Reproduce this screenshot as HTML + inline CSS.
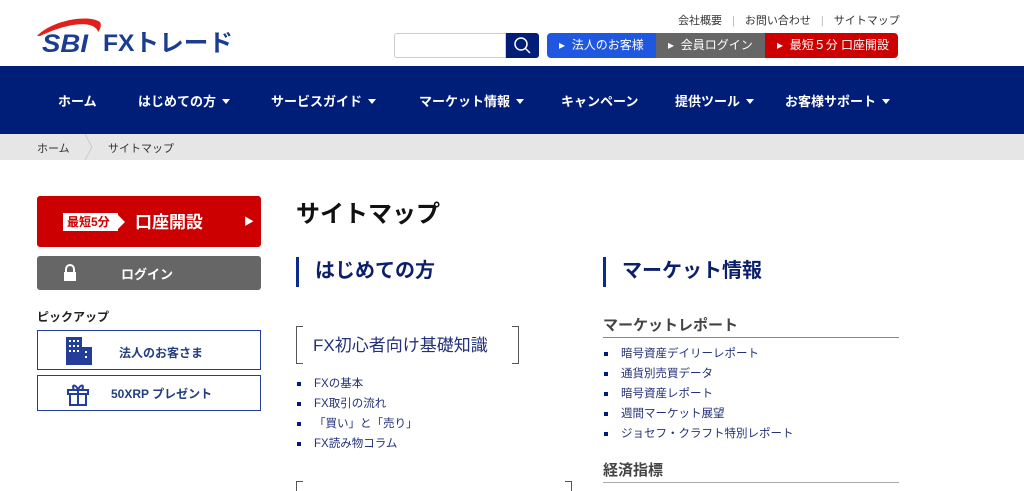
<!DOCTYPE html>
<html><head><meta charset="utf-8"><style>
*{margin:0;padding:0;box-sizing:border-box}
body{width:1024px;height:487px;overflow:hidden;background:#fff;font-family:"Liberation Sans","Noto Sans CJK JP",sans-serif;color:#222;position:relative}
.a{position:absolute;white-space:nowrap}
.nav{left:0;top:66px;width:1024px;height:68px;background:#001e78}
.nav span{position:absolute;top:25px;color:#fff;font-size:13px;font-weight:bold}
.tri{display:inline-block;width:0;height:0;border-left:4px solid transparent;border-right:4px solid transparent;border-top:5px solid #fff;margin-left:6px;vertical-align:2px}
.bc{left:0;top:134px;width:1024px;height:26px;background:#e6e6e6;font-size:11px;color:#333}
ul{list-style:none}
li{font-size:11.5px;color:#23307a;height:20px;line-height:20px;padding-left:18px;position:relative}
li:before{content:"";position:absolute;left:1px;top:8px;width:4px;height:4px;background:#001e78}
.h2{font-size:20px;font-weight:bold;color:#0b1f6b;border-left:3px solid #0b2a8a;padding-left:16px;height:30px;line-height:28px}
</style></head><body>
<svg class="a" style="left:34px;top:14px" width="210" height="44" viewBox="0 0 210 44">
<path d="M3 22 C18 6 55 0 66 8 C68 11 66 16 64 18 C62 8 40 6 6 22 Z" fill="#e0201b"/>
<text x="8" y="38" font-family="Liberation Sans" font-weight="bold" font-style="italic" font-size="25" fill="#1b3d8f" textLength="46" lengthAdjust="spacingAndGlyphs">SBI</text>
<text x="69" y="37" font-family="Liberation Sans,Noto Sans CJK JP" font-weight="bold" font-size="24" fill="#1b3d8f" textLength="130" lengthAdjust="spacingAndGlyphs">FXトレード</text>
</svg>
<div class="a" style="left:678px;top:12px;font-size:11px;color:#333">会社概要<span style="color:#bbb;margin:0 10px">|</span>お問い合わせ<span style="color:#bbb;margin:0 10px">|</span>サイトマップ</div>
<div class="a" style="left:394px;top:33px;width:112px;height:25px;border:1px solid #ccc;border-radius:3px 0 0 3px"></div>
<div class="a" style="left:506px;top:33px;width:33px;height:25px;background:#001e78;border-radius:0 3px 3px 0">
<svg width="33" height="25"><circle cx="15" cy="11" r="6" stroke="#fff" stroke-width="1.5" fill="none"/><path d="M19 15 L24 20" stroke="#fff" stroke-width="1.5"/></svg></div>
<div class="a" style="left:547px;top:33px;width:109px;height:25px;background:#1f57e0;border-radius:4px 0 0 4px;color:#fff;font-size:12px;line-height:25px;padding-left:12px">▸&nbsp; 法人のお客様</div>
<div class="a" style="left:656px;top:33px;width:109px;height:25px;background:#666;color:#fff;font-size:12px;line-height:25px;padding-left:12px">▸&nbsp; 会員ログイン</div>
<div class="a" style="left:765px;top:33px;width:133px;height:25px;background:#cc0000;border-radius:0 4px 4px 0;color:#fff;font-size:12px;line-height:25px;padding-left:12px">▸&nbsp; 最短５分 口座開設</div>
<div class="a nav">
<span style="left:58px">ホーム</span>
<span style="left:138px">はじめての方<i class="tri"></i></span>
<span style="left:271px">サービスガイド<i class="tri"></i></span>
<span style="left:419px">マーケット情報<i class="tri"></i></span>
<span style="left:561px">キャンペーン</span>
<span style="left:675px">提供ツール<i class="tri"></i></span>
<span style="left:785px">お客様サポート<i class="tri"></i></span>
</div>
<div class="a bc"><span class="a" style="left:37px;top:6px">ホーム</span>
<svg class="a" style="left:84px;top:0" width="10" height="26"><path d="M1 0 L8 13 L1 26" stroke="#ccc" fill="none"/></svg>
<span class="a" style="left:108px;top:6px">サイトマップ</span></div>
<div class="a" style="left:37px;top:196px;width:224px;height:51px;background:#cc0000;border-radius:3px"></div>
<div class="a" style="left:63px;top:213px;width:55px;height:18px;background:#fff;color:#cc0000;font-size:12px;font-weight:bold;line-height:18px;padding-left:4px">最短5分</div>
<div class="a" style="left:118px;top:215px;width:0;height:0;border-top:7px solid transparent;border-bottom:7px solid transparent;border-left:7px solid #fff"></div>
<div class="a" style="left:135px;top:208px;color:#fff;font-size:17px;font-weight:bold">口座開設</div>
<div class="a" style="left:244px;top:213px;color:#fff;font-size:10px">▶</div>
<div class="a" style="left:37px;top:256px;width:224px;height:34px;background:#666;border-radius:3px"></div>
<svg class="a" style="left:62px;top:264px" width="16" height="18"><path d="M4 8 V5 a4 4 0 0 1 8 0 V8" stroke="#fff" stroke-width="2" fill="none"/><rect x="2" y="8" width="12" height="9" fill="#fff"/></svg>
<div class="a" style="left:121px;top:264px;color:#fff;font-size:13px;font-weight:bold">ログイン</div>
<div class="a" style="left:37px;top:308px;font-size:12px;font-weight:bold;color:#222">ピックアップ</div>
<div class="a" style="left:37px;top:330px;width:224px;height:40px;border:1px solid #233e99"></div>
<svg class="a" style="left:66px;top:337px" width="26" height="28"><rect x="0" y="0" width="16" height="28" fill="#233e99"/><rect x="16" y="10" width="10" height="18" fill="#233e99"/><g fill="#fff"><rect x="3" y="3" width="2" height="2"/><rect x="7" y="3" width="2" height="2"/><rect x="11" y="3" width="2" height="2"/><rect x="3" y="8" width="2" height="2"/><rect x="7" y="8" width="2" height="2"/><rect x="11" y="8" width="2" height="2"/><rect x="3" y="13" width="2" height="2"/><rect x="7" y="13" width="2" height="2"/><rect x="11" y="13" width="2" height="2"/><rect x="19" y="14" width="2" height="2"/><rect x="19" y="19" width="2" height="2"/></g></svg>
<div class="a" style="left:119px;top:344px;font-size:12px;font-weight:bold;color:#233e80">法人のお客さま</div>
<div class="a" style="left:37px;top:375px;width:224px;height:36px;border:1px solid #233e99"></div>
<svg class="a" style="left:65px;top:381px" width="26" height="26"><path d="M3 9 H23 V13 H3 Z M5 13 V24 H21 V13 M13 9 V24 M9 9 C6 3 11 3 13 9 C15 3 20 3 17 9" stroke="#233e99" stroke-width="2" fill="none"/></svg>
<div class="a" style="left:111px;top:385px;font-size:12px;font-weight:bold;color:#233e80">50XRP プレゼント</div>
<div class="a" style="left:296px;top:194px;font-size:24px;font-weight:bold;color:#111">サイトマップ</div>
<div class="a h2" style="left:296px;top:257px">はじめての方</div>
<div class="a h2" style="left:603px;top:257px">マーケット情報</div>
<div class="a" style="left:296px;top:326px;width:223px;height:38px;border:1.5px solid #555"></div>
<div class="a" style="left:303px;top:324px;width:209px;height:42px;background:#fff"></div>
<div class="a" style="left:313px;top:331px;font-size:17px;color:#23307a">FX初心者向け基礎知識</div>
<ul class="a" style="left:296px;top:374px"><li>FXの基本</li><li>FX取引の流れ</li><li>「買い」と「売り」</li><li>FX読み物コラム</li></ul>
<div class="a" style="left:296px;top:481px;width:276px;height:10px;border:1.5px solid #555;border-bottom:none"></div>
<div class="a" style="left:303px;top:479px;width:262px;height:10px;background:#fff"></div>
<div class="a" style="left:603px;top:314px;width:296px;height:24px;border-bottom:1px solid #888;font-size:15px;font-weight:bold;color:#444">マーケットレポート</div>
<ul class="a" style="left:603px;top:344px"><li>暗号資産デイリーレポート</li><li>通貨別売買データ</li><li>暗号資産レポート</li><li>週間マーケット展望</li><li>ジョセフ・クラフト特別レポート</li></ul>
<div class="a" style="left:603px;top:459px;width:296px;height:24px;border-bottom:1px solid #aaa;font-size:15px;font-weight:bold;color:#444">経済指標</div>
</body></html>
